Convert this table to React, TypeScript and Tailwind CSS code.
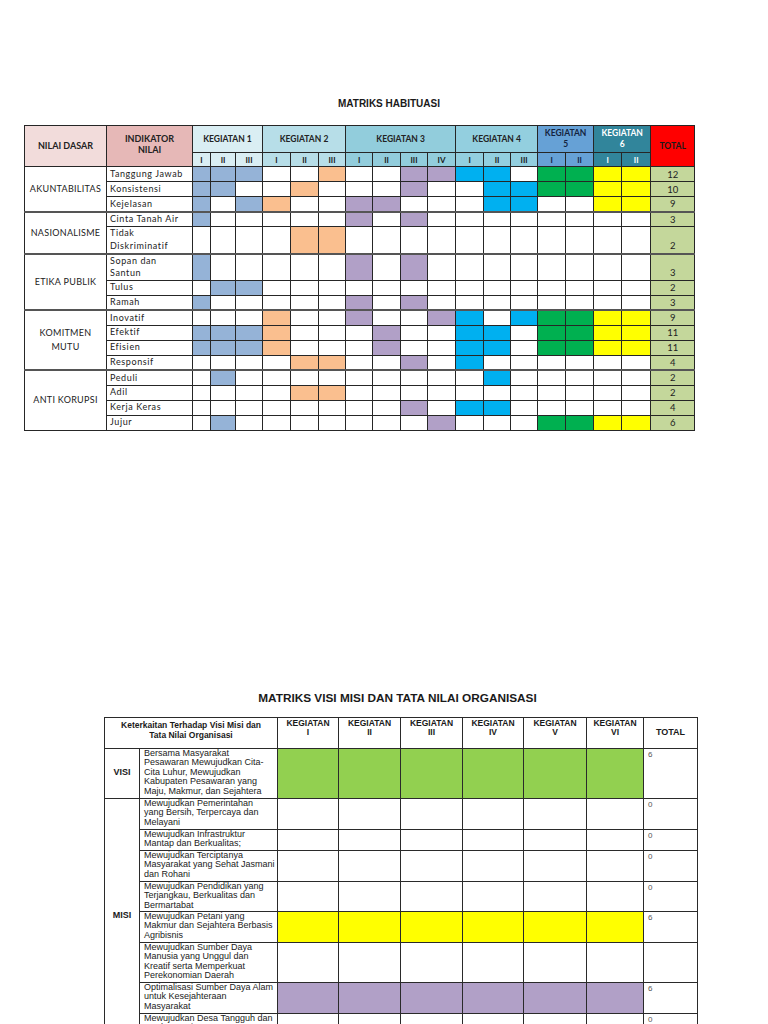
import React from "react";

const fill: Record<string, string> = {
  ".": "bg-white",
  b: "bg-[#95b3d7]",
  o: "bg-[#fabf8f]",
  p: "bg-[#b1a0c7]",
  c: "bg-[#00b0f0]",
  g: "bg-[#00b050]",
  y: "bg-[#ffff00]",
};

type Row = { label: string[]; h: string; cells: string; total: number };
type Group = { name: string[]; rows: Row[] };

const groups: Group[] = [
  {
    name: ["AKUNTABILITAS"],
    rows: [
      { label: ["Tanggung Jawab"], h: "h-[15px]", cells: "bbb..o..ppcc.ggyy", total: 12 },
      { label: ["Konsistensi"], h: "h-[15px]", cells: "bb..o...p..ccggyy", total: 10 },
      { label: ["Kejelasan"], h: "h-[15px]", cells: "b.bo..pp...cc..yy", total: 9 },
    ],
  },
  {
    name: ["NASIONALISME"],
    rows: [
      { label: ["Cinta Tanah Air"], h: "h-[15px]", cells: "b.....p.p........", total: 3 },
      { label: ["Tidak", "Diskriminatif"], h: "h-[27px]", cells: "....oo...........", total: 2 },
    ],
  },
  {
    name: ["ETIKA PUBLIK"],
    rows: [
      { label: ["Sopan dan", "Santun"], h: "h-[26px]", cells: "b.....p.p........", total: 3 },
      { label: ["Tulus"], h: "h-[15px]", cells: ".bb..............", total: 2 },
      { label: ["Ramah"], h: "h-[15px]", cells: "b.....p.p........", total: 3 },
    ],
  },
  {
    name: ["KOMITMEN", "MUTU"],
    rows: [
      { label: ["Inovatif"], h: "h-[15px]", cells: "...o..p..pc.cggyy", total: 9 },
      { label: ["Efektif"], h: "h-[15px]", cells: "bbbo...p..cc.ggyy", total: 11 },
      { label: ["Efisien"], h: "h-[15px]", cells: "bbbo...p..cc.ggyy", total: 11 },
      { label: ["Responsif"], h: "h-[15px]", cells: "....oo..p.c......", total: 4 },
    ],
  },
  {
    name: ["ANTI KORUPSI"],
    rows: [
      { label: ["Peduli"], h: "h-[15px]", cells: ".b.........c.....", total: 2 },
      { label: ["Adil"], h: "h-[15px]", cells: "....oo...........", total: 2 },
      { label: ["Kerja Keras"], h: "h-[15px]", cells: "........p.cc.....", total: 4 },
      { label: ["Jujur"], h: "h-[15px]", cells: ".b.......p...ggyy", total: 6 },
    ],
  },
];

const colW = [
  "w-[82px]", "w-[86px]",
  "w-[18px]", "w-[25px]", "w-[27px]",
  "w-[28px]", "w-[28px]", "w-[27px]",
  "w-[27px]", "w-[28px]", "w-[27px]", "w-[28px]",
  "w-[28px]", "w-[27px]", "w-[27px]",
  "w-[28px]", "w-[28px]",
  "w-[28px]", "w-[29px]",
  "w-[44px]",
];

const subCols: { label: string; cls: string }[] = [
  { label: "I", cls: "bg-[#daeef3] text-[#1a1a1a]" },
  { label: "II", cls: "bg-[#daeef3] text-[#1a1a1a]" },
  { label: "III", cls: "bg-[#daeef3] text-[#1a1a1a]" },
  { label: "I", cls: "bg-[#b7dee8] text-[#1a1a1a]" },
  { label: "II", cls: "bg-[#b7dee8] text-[#1a1a1a]" },
  { label: "III", cls: "bg-[#b7dee8] text-[#1a1a1a]" },
  { label: "I", cls: "bg-[#92cddc] text-[#1a1a1a]" },
  { label: "II", cls: "bg-[#92cddc] text-[#1a1a1a]" },
  { label: "III", cls: "bg-[#92cddc] text-[#1a1a1a]" },
  { label: "IV", cls: "bg-[#92cddc] text-[#1a1a1a]" },
  { label: "I", cls: "bg-[#93cfdf] text-[#1a1a1a]" },
  { label: "II", cls: "bg-[#93cfdf] text-[#1a1a1a]" },
  { label: "III", cls: "bg-[#93cfdf] text-[#1a1a1a]" },
  { label: "I", cls: "bg-[#66a1d6] text-[#14243f]" },
  { label: "II", cls: "bg-[#66a1d6] text-[#14243f]" },
  { label: "I", cls: "bg-[#31859b] text-white" },
  { label: "II", cls: "bg-[#31859b] text-white" },
];

const bd = "border border-[#262626]";

function Habituasi() {
  return (
    <table className="table-fixed border-collapse w-[671px] ml-[24px] font-['Lato',sans-serif] text-[#222]">
      <colgroup>
        {colW.map((w, i) => (
          <col key={i} className={w} />
        ))}
      </colgroup>
      <thead>
        <tr className="h-[27px]">
          <th rowSpan={2} className={`${bd} bg-[#f2dcdb] text-[9px] font-bold`}>NILAI DASAR</th>
          <th rowSpan={2} className={`${bd} bg-[#e6b8b7] text-[9px] font-bold leading-[11px] align-top pt-[7px]`}>
            INDIKATOR
            <br />
            NILAI
          </th>
          <th colSpan={3} className={`${bd} bg-[#daeef3] text-[8.5px] font-bold`}>KEGIATAN 1</th>
          <th colSpan={3} className={`${bd} bg-[#b7dee8] text-[8.5px] font-bold`}>KEGIATAN 2</th>
          <th colSpan={4} className={`${bd} bg-[#92cddc] text-[8.5px] font-bold`}>KEGIATAN 3</th>
          <th colSpan={3} className={`${bd} bg-[#93cfdf] text-[8.5px] font-bold`}>KEGIATAN 4</th>
          <th colSpan={2} className={`${bd} bg-[#66a1d6] text-[#14243f] text-[8.5px] font-bold leading-[11px]`}>
            KEGIATAN
            <br />5
          </th>
          <th colSpan={2} className={`${bd} bg-[#31859b] text-white text-[8.5px] font-bold leading-[11px]`}>
            KEGIATAN
            <br />6
          </th>
          <th rowSpan={2} className={`${bd} bg-[#ff0000] text-[8.5px] font-bold text-[#1a1a1a]`}>TOTAL</th>
        </tr>
        <tr className="h-[14px]">
          {subCols.map((s, i) => (
            <th key={i} className={`${bd} ${s.cls} text-[8px] font-bold leading-[12px] p-0`}>
              {s.label}
            </th>
          ))}
        </tr>
      </thead>
      <tbody>
        {groups.map((g, gi) =>
          g.rows.map((r, ri) => (
            <tr key={`${gi}-${ri}`} className={r.h}>
              {ri === 0 && (
                <td
                  rowSpan={g.rows.length}
                  className={`${bd} ${gi > 0 ? "border-t-2 border-t-[#555]" : ""} text-center text-[9px] leading-[14px] tracking-[0.3px] p-0`}
                >
                  {g.name.map((n, k) => (
                    <div key={k}>{n}</div>
                  ))}
                </td>
              )}
              <td
                className={`${bd} ${ri === 0 && gi > 0 ? "border-t-2 border-t-[#555]" : ""} text-[9px] leading-[12.5px] tracking-[0.6px] px-[3px] py-0 whitespace-nowrap overflow-hidden`}
              >
                {r.label.map((l, k) => (
                  <div key={k}>{l}</div>
                ))}
              </td>
              {r.cells.split("").map((c, ci) => (
                <td
                  key={ci}
                  className={`${bd} ${ri === 0 && gi > 0 ? "border-t-2 border-t-[#555]" : ""} ${fill[c]} p-0`}
                />
              ))}
              <td
                className={`${bd} ${ri === 0 && gi > 0 ? "border-t-2 border-t-[#555]" : ""} bg-[#c4d79b] text-center text-[9.5px] leading-[12.5px] align-bottom p-0`}
              >
                {r.total}
              </td>
            </tr>
          ))
        )}
      </tbody>
    </table>
  );
}

type VRow = { lines: string[]; h: string; fillCls: string; total: string };

const visiRow: VRow = {
  lines: [
    "Bersama Masyarakat",
    "Pesawaran Mewujudkan Cita-",
    "Cita Luhur, Mewujudkan",
    "Kabupaten Pesawaran yang",
    "Maju, Makmur, dan Sejahtera",
  ],
  h: "h-[50px]",
  fillCls: "bg-[#92d050]",
  total: "6",
};

const misiRows: VRow[] = [
  { lines: ["Mewujudkan Pemerintahan", "yang Bersih, Terpercaya dan", "Melayani"], h: "h-[31px]", fillCls: "bg-white", total: "0" },
  { lines: ["Mewujudkan Infrastruktur", "Mantap dan Berkualitas;"], h: "h-[21px]", fillCls: "bg-white", total: "0" },
  { lines: ["Mewujudkan Terciptanya", "Masyarakat yang Sehat Jasmani", "dan Rohani"], h: "h-[31px]", fillCls: "bg-white", total: "0" },
  { lines: ["Mewujudkan Pendidikan yang", "Terjangkau, Berkualitas dan", "Bermartabat"], h: "h-[30px]", fillCls: "bg-white", total: "0" },
  { lines: ["Mewujudkan Petani yang", "Makmur dan Sejahtera Berbasis", "Agribisnis"], h: "h-[31px]", fillCls: "bg-[#ffff00]", total: "6" },
  { lines: ["Mewujudkan Sumber Daya", "Manusia yang Unggul dan", "Kreatif serta Memperkuat", "Perekonomian Daerah"], h: "h-[40px]", fillCls: "bg-white", total: "" },
  { lines: ["Optimalisasi Sumber Daya Alam", "untuk Kesejahteraan", "Masyarakat"], h: "h-[31px]", fillCls: "bg-[#b1a0c7]", total: "6" },
  { lines: ["Mewujudkan Desa Tangguh dan", "Berdaya Saing"], h: "h-[21px]", fillCls: "bg-white", total: "0" },
];

const keg = ["I", "II", "III", "IV", "V", "VI"];
const bd2 = "border border-[#2a2a2a]";

function VRowCells({ r }: { r: VRow }) {
  return (
    <>
      <td className={`${bd2} align-top px-[4px] py-0 text-[9px] leading-[9.6px] whitespace-nowrap overflow-hidden text-[#222]`}>
        {r.lines.map((l, k) => (
          <div key={k}>{l}</div>
        ))}
      </td>
      {keg.map((k) => (
        <td key={k} className={`${bd2} ${r.fillCls} p-0`} />
      ))}
      <td className={`${bd2} border-l-[#6b6b6b] align-top px-[4px] pt-[1px] text-[8px] leading-[9px] text-[#555]`}>{r.total}</td>
    </>
  );
}

function VisiMisi() {
  return (
    <table className="table-fixed border-collapse w-[593px] ml-[104px] font-['Liberation_Sans',Arial,sans-serif] text-[#1a1a1a]">
      <colgroup>
        <col className="w-[35px]" />
        <col className="w-[138px]" />
        <col className="w-[61px]" />
        <col className="w-[62px]" />
        <col className="w-[62px]" />
        <col className="w-[61px]" />
        <col className="w-[63px]" />
        <col className="w-[57px]" />
        <col className="w-[54px]" />
      </colgroup>
      <thead>
        <tr className="h-[31px]">
          <th colSpan={2} className={`${bd2} align-top pt-[2px] text-[8.5px] leading-[10px] font-bold`}>
            Keterkaitan Terhadap Visi Misi dan
            <br />
            Tata Nilai Organisasi
          </th>
          {keg.map((k) => (
            <th key={k} className={`${bd2} align-top pt-[1px] text-[8.5px] leading-[9.5px] font-bold`}>
              KEGIATAN
              <br />
              {k}
            </th>
          ))}
          <th className={`${bd2} border-l-[#6b6b6b] text-[9px] font-bold`}>TOTAL</th>
        </tr>
      </thead>
      <tbody>
        <tr className={visiRow.h}>
          <td className={`${bd2} text-center text-[9px] font-bold`}>VISI</td>
          <VRowCells r={visiRow} />
        </tr>
        {misiRows.map((r, i) => (
          <tr key={i} className={r.h}>
            {i === 0 && (
              <td rowSpan={misiRows.length} className={`${bd2} text-center text-[9px] font-bold`}>
                MISI
              </td>
            )}
            <VRowCells r={r} />
          </tr>
        ))}
      </tbody>
    </table>
  );
}

export default function App() {
  return (
    <div className="w-[768px] min-h-[1024px] bg-white overflow-hidden">
      <div className="pt-[97px] pl-[10px] text-center h-[111px] text-[10px] leading-[14px] font-bold font-['Liberation_Sans',Arial,sans-serif] text-[#1a1a1a]">
        MATRIKS HABITUASI
      </div>
      <div className="mt-[14px]">
        <Habituasi />
      </div>
      <div className="mt-[260px] pl-[27px] text-center text-[11.8px] leading-[14px] font-bold font-['Liberation_Sans',Arial,sans-serif] text-[#1a1a1a]">
        MATRIKS VISI MISI DAN TATA NILAI ORGANISASI
      </div>
      <div className="mt-[12px]">
        <VisiMisi />
      </div>
    </div>
  );
}
